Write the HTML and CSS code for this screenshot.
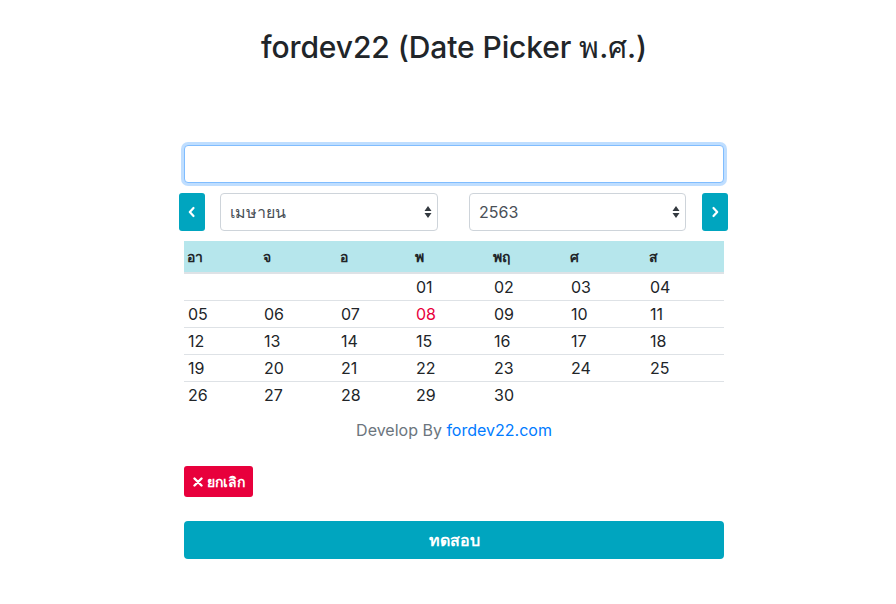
FILE: index.html
```html
<!DOCTYPE html>
<html lang="th">
<head>
<meta charset="utf-8">
<title>fordev22 Date Picker</title>
<link rel="stylesheet" href="styles.css">
</head>
<body>
<div class="page">
  <h2 class="title">fordev22 (Date Picker พ.ศ.)</h2>
  <div class="picker">
    <input class="date-input" type="text">
    <div class="nav">
      <button class="nav-btn" type="button" aria-label="prev">
        <svg width="10" height="12" viewBox="0 0 10 12"><path d="M6.5 2 L2.8 6 L6.5 10" fill="none" stroke="#fff" stroke-width="2.2" stroke-linecap="round" stroke-linejoin="round"/></svg>
      </button>
      <div class="select sel-month">
        <span>เมษายน</span>
        <svg class="caret" width="8" height="14" viewBox="0 0 8 14"><path d="M4 1 L7.5 6 L0.5 6 Z M4 13 L7.5 8 L0.5 8 Z" fill="#343a40"/></svg>
      </div>
      <div class="select sel-year">
        <span>2563</span>
        <svg class="caret" width="8" height="14" viewBox="0 0 8 14"><path d="M4 1 L7.5 6 L0.5 6 Z M4 13 L7.5 8 L0.5 8 Z" fill="#343a40"/></svg>
      </div>
      <button class="nav-btn" type="button" aria-label="next">
        <svg width="10" height="12" viewBox="0 0 10 12"><path d="M3.5 2 L7.2 6 L3.5 10" fill="none" stroke="#fff" stroke-width="2.2" stroke-linecap="round" stroke-linejoin="round"/></svg>
      </button>
    </div>
    <table class="cal">
      <colgroup>
        <col class="c1"><col class="c2"><col class="c3"><col class="c4"><col class="c5"><col class="c6"><col class="c7">
      </colgroup>
      <thead>
        <tr><th>อา</th><th>จ</th><th>อ</th><th>พ</th><th>พฤ</th><th>ศ</th><th>ส</th></tr>
      </thead>
      <tbody>
        <tr><td></td><td></td><td></td><td>01</td><td>02</td><td>03</td><td>04</td></tr>
        <tr><td>05</td><td>06</td><td>07</td><td class="today">08</td><td>09</td><td>10</td><td>11</td></tr>
        <tr><td>12</td><td>13</td><td>14</td><td>15</td><td>16</td><td>17</td><td>18</td></tr>
        <tr><td>19</td><td>20</td><td>21</td><td>22</td><td>23</td><td>24</td><td>25</td></tr>
        <tr><td>26</td><td>27</td><td>28</td><td>29</td><td>30</td><td></td><td></td></tr>
      </tbody>
    </table>
    <p class="credit">Develop By <a href="#">fordev22.com</a></p>
    <div class="actions">
      <button class="btn-cancel" type="button">
        <svg width="10" height="10" viewBox="0 0 10 10"><path d="M1.5 1.5 L8.5 8.5 M8.5 1.5 L1.5 8.5" stroke="#fff" stroke-width="2.4" stroke-linecap="round"/></svg>
        ยกเลิก
      </button>
    </div>
    <button class="btn-test" type="button">ทดสอบ</button>
  </div>
</div>
</body>
</html>
```

FILE: styles.css
```css
* { box-sizing: border-box; }
html, body { margin: 0; padding: 0; background: #fff; }
body {
  font-family: Inter, "Noto Sans", "Liberation Sans", sans-serif;
  color: #212529;
  font-size: 16px;
}
.page { padding-top: 28px; }
.title {
  margin: 0;
  font-size: 30px;
  font-weight: 500;
  line-height: 38px;
  text-align: center;
  padding-left: 12px;
  letter-spacing: -0.1px;
}
.picker {
  width: 540px;
  margin: 79px 0 0 184px;
}
.date-input {
  display: block;
  width: 540px;
  height: 38px;
  border: 1px solid #80bdff;
  border-radius: 4px;
  box-shadow: 0 0 0 3px rgba(0,123,255,.25);
  outline: none;
  font: inherit;
  padding: 6px 12px;
}
.nav {
  display: flex;
  align-items: center;
  margin: 10px 0 0 -5px;
  width: 550px;
  height: 38px;
}
.nav-btn {
  width: 26px;
  height: 38px;
  border: 0;
  border-radius: 3px;
  background: #00a5bf;
  display: flex;
  align-items: center;
  justify-content: center;
  padding: 0;
}
.select {
  position: relative;
  height: 38px;
  border: 1px solid #ced4da;
  border-radius: 4px;
  display: flex;
  align-items: center;
  padding-left: 9px;
  color: #495057;
  font-size: 16px;
}
.sel-month { width: 218px; margin-left: 15px; }
.sel-year { width: 217px; margin-left: 31px; margin-right: 16px; }
.caret { position: absolute; right: 5px; top: 11px; }
.cal {
  width: 540px;
  border-collapse: collapse;
  margin-top: 10px;
  table-layout: fixed;
}
.c1 { width: 76px; }
.c2 { width: 77px; }
.c3 { width: 75px; }
.c4 { width: 78px; }
.c5 { width: 77px; }
.c6 { width: 79px; }
.c7 { width: 78px; }
.cal th {
  background: #b6e6ec;
  text-align: left;
  font-size: 14px;
  font-weight: 700;
  height: 32px;
  padding: 0 3px;
  border-bottom: 2px solid #dee2e6;
}
.cal td {
  height: 27px;
  padding: 0 4px;
  border-top: 1px solid #dee2e6;
  font-size: 16px;
}
.cal tbody tr:first-child td { border-top: 0; height: 27px; }
.cal td.today { color: #e8003c; }
.credit {
  margin: 10px 0 0;
  text-align: center;
  color: #6c757d;
  line-height: 24px;
}
.credit a { color: #007bff; text-decoration: none; }
.actions { margin-top: 24px; }
.btn-cancel {
  height: 31px;
  width: 69px;
  border: 0;
  border-radius: 3px;
  background: #e8003c;
  color: #fff;
  font: inherit;
  font-size: 14px;
  font-weight: 700;
  display: flex;
  align-items: center;
  justify-content: center;
  gap: 4px;
  padding: 0 6px;
}
.btn-test {
  display: block;
  margin-top: 24px;
  width: 540px;
  height: 38px;
  border: 0;
  border-radius: 4px;
  background: #00a5bf;
  color: #fff;
  font: inherit;
  font-weight: 700;
  font-size: 16px;
}
```
